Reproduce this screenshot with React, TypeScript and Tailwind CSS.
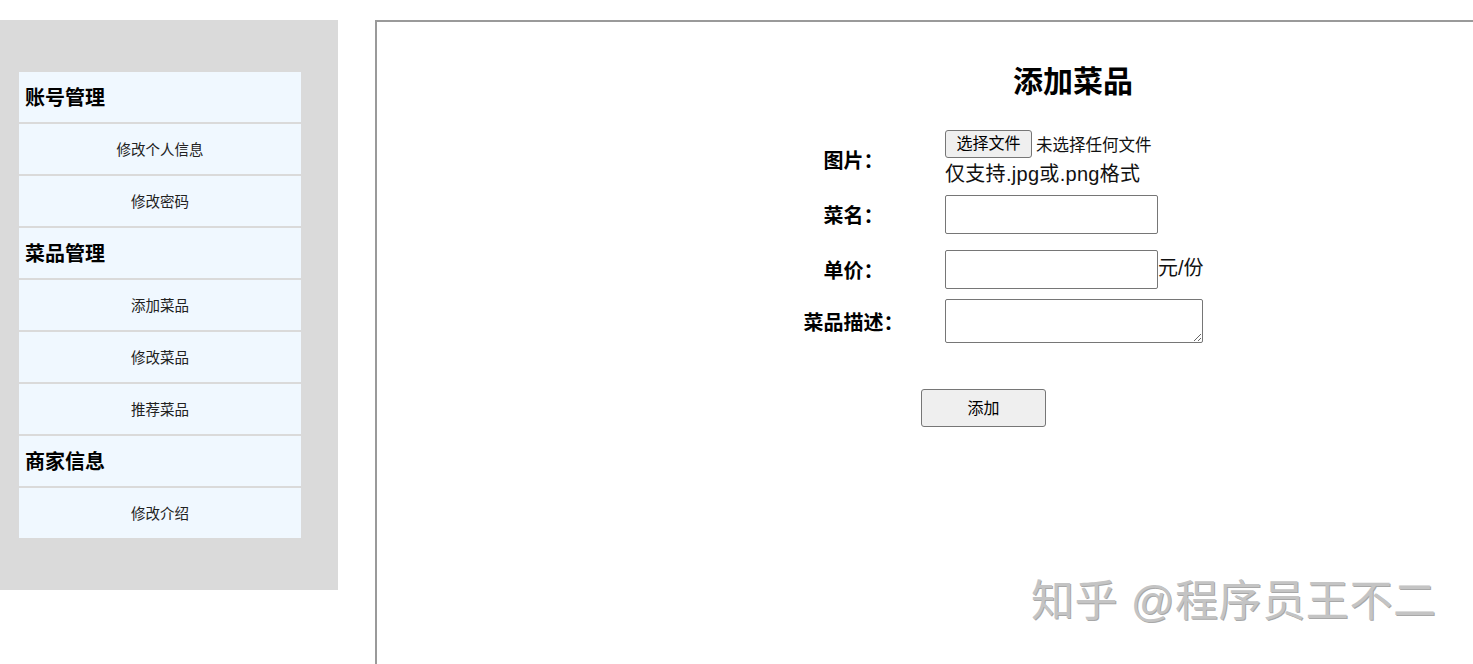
import React from "react";

const font = "font-['Liberation_Sans','Noto_Sans_CJK_SC',sans-serif]";

type MenuItem = { label: string; header?: boolean };

const menu: MenuItem[] = [
  { label: "账号管理", header: true },
  { label: "修改个人信息" },
  { label: "修改密码" },
  { label: "菜品管理", header: true },
  { label: "添加菜品" },
  { label: "修改菜品" },
  { label: "推荐菜品" },
  { label: "商家信息", header: true },
  { label: "修改介绍" },
];

function Sidebar() {
  return (
    <aside className="mt-[20px] h-[570px] w-[338px] shrink-0 bg-[#dadada] pl-[19px] pt-[52px]">
      <div className="flex w-[282px] flex-col gap-[2px]">
        {menu.map((m) =>
          m.header ? (
            <div
              key={m.label}
              className="flex h-[50px] items-center bg-[#f0f8ff] pl-[6px] pt-[2px] text-[20px] font-bold text-black"
            >
              {m.label}
            </div>
          ) : (
            <div
              key={m.label}
              className="flex h-[50px] items-center justify-center bg-[#f0f8ff] pt-[3px] text-[14.5px] text-[#222]"
            >
              {m.label}
            </div>
          )
        )}
      </div>
    </aside>
  );
}

function Label({ children }: { children: React.ReactNode }) {
  return (
    <div className="w-[120px] shrink-0 pl-[7px] pt-[3px] text-center text-[20px] font-bold text-black">
      {children}
    </div>
  );
}

function AddDishForm() {
  return (
    <div className="ml-[413px] w-[566px]">
      <h1 className="mt-[40px] text-center text-[30px] font-bold leading-[40px] text-black">
        添加菜品
      </h1>

      <div className="mt-[28px] flex items-center gap-[35px]">
        <Label>图片：</Label>
        <div className="flex flex-col">
          <div className="flex items-center gap-[4px]">
            <button className="h-[28px] w-[87px] rounded-[3px] border border-[#767676] bg-[#efefef] text-[16px] leading-none text-black">
              选择文件
            </button>
            <span className="pt-[2px] text-[16.5px] text-[#111]">未选择任何文件</span>
          </div>
          <div className="pt-[2px] text-[20px] leading-[28px] tracking-[0.3px] text-[#111]">
            仅支持.jpg或.png格式
          </div>
        </div>
      </div>

      <div className="mt-[7px] flex items-center gap-[35px]">
        <Label>菜名：</Label>
        <input className="h-[39px] w-[213px] rounded-[2px] border border-[#767676] bg-white px-1 outline-none" />
      </div>

      <div className="mt-[16px] flex items-center gap-[35px]">
        <Label>单价：</Label>
        <div className="flex items-center">
          <input className="h-[39px] w-[213px] rounded-[2px] border border-[#767676] bg-white px-1 outline-none" />
          <span className="pb-[3px] text-[20px] text-[#111]">元/份</span>
        </div>
      </div>

      <div className="mt-[10px] flex items-center gap-[35px]">
        <Label>菜品描述：</Label>
        <textarea className="block h-[44px] w-[258px] rounded-[2px] border border-[#767676] bg-white outline-none" />
      </div>

      <div className="mt-[46px] pl-[131px]">
        <button className="h-[38px] w-[125px] rounded-[3px] border border-[#767676] bg-[#efefef] pt-[2px] text-[16px] text-black">
          添加
        </button>
      </div>
    </div>
  );
}

export default function App() {
  return (
    <div className={`relative flex h-[664px] w-[1473px] overflow-hidden bg-white ${font}`}>
      <Sidebar />
      <main className="ml-[37px] mt-[20px] h-[644px] flex-1 border-l-2 border-t-2 border-[#9a9a9a]">
        <AddDishForm />
      </main>
      {/* watermark */}
      <div className="pointer-events-none absolute left-[1031px] top-[580px] whitespace-nowrap text-[43px] leading-none tracking-[0.6px] text-[#c4c4c4] [text-shadow:1px_1px_0_#a8a8a8]">
        知乎 @程序员王不二
      </div>
    </div>
  );
}
